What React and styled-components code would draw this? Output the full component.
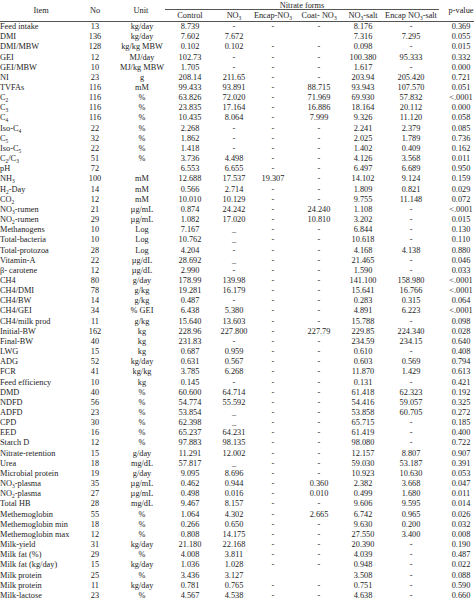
import React from "react";
import styled, { createGlobalStyle } from "styled-components";

const Global = createGlobalStyle`
  html, body { margin: 0; padding: 0; background: #fff; }
  body { overflow: hidden; width: 474px; height: 602px; }
`;

const Wrap = styled.div`
  width: 474px;
  height: 602px;
  overflow: hidden;
  font-family: "Liberation Serif", "Times New Roman", serif;
  font-size: 8.3px;
  color: #1c1c1c;
`;

const Table = styled.table`
  border-collapse: collapse;
  table-layout: fixed;
  width: 482px;
`;

const Head = styled.th`
  font-weight: normal;
  padding: 0;
  text-align: center;
  white-space: nowrap;
  height: ${(p) => p.$h || 10}px;
  vertical-align: middle;
  border-bottom: ${(p) => (p.$rule ? "0.8px solid #555" : "none")};
  padding-left: ${(p) => p.$pl || 0}px;
`;

const SpanHead = styled.th`
  font-weight: normal;
  padding: 0;
  text-align: center;
  height: 10px;
  position: relative;
`;

const MidRule = styled.span`
  position: absolute;
  left: 1px;
  right: 1px;
  bottom: 0;
  border-bottom: 0.8px solid #555;
`;

const Row = styled.tr`
  height: 10.17px;
`;

const Cell = styled.td`
  padding: 0;
  padding-left: ${(p) => p.$pl || 0}px;
  height: 10.17px;
  line-height: 10px;
  white-space: nowrap;
  text-align: ${(p) => (p.$left ? "left" : "center")};
`;

const Sub = styled.sub`
  font-size: 5.5px;
  line-height: 0;
  vertical-align: -1.5px;
`;

const Low = styled.span`
  display: inline-block;
  transform: translateY(2px);
`;

const s = (base, sub, rest = "") => (
  <>
    {base}
    <Sub>{sub}</Sub>
    {rest}
  </>
);

const cols = [82, 26, 56, 52, 36, 42, 50, 38, 58, 42];

const L = "_low";

const rows = [
  ["Feed intake", "13", "kg/day", "8.739", "-", "-", "-", "8.176", "-", "0.369"],
  ["DMI", "136", "kg/day", "7.602", "7.672", "", "", "7.316", "7.295", "0.055"],
  ["DMI/MBW", "128", "kg/kg MBW", "0.102", "0.102", "-", "-", "0.098", "-", "0.015"],
  ["GEI", "12", "MJ/day", "102.73", "-", "-", "-", "100.380", "95.333", "0.332"],
  ["GEI/MBW", "10", "MJ/kg MBW", "1.705", "-", "-", "-", "1.617", "-", "0.000"],
  ["NI", "23", "g", "208.14", "211.65", "-", "-", "203.94", "205.420", "0.721"],
  ["TVFAs", "116", "mM", "99.433", "93.891", "-", "88.715", "93.943", "107.570", "0.051"],
  [s("C", "2"), "116", "%", "63.826", "72.020", "-", "71.969", "69.930", "57.832", "<.0001"],
  [s("C", "3"), "116", "%", "23.835", "17.164", "-", "16.886", "18.164", "20.112", "0.000"],
  [s("C", "4"), "116", "%", "10.435", "8.064", "-", "7.999", "9.326", "11.120", "0.058"],
  [s("Iso-C", "4"), "22", "%", "2.268", "-", "-", "-", "2.241", "2.379", "0.085"],
  [s("C", "5"), "32", "%", "1.862", "-", "-", "-", "2.025", "1.789", "0.736"],
  [s("Iso-C", "5"), "22", "%", "1.418", "-", "-", "-", "1.402", "0.409", "0.162"],
  [<>{s("C", "2")}/{s("C", "3")}</>, "51", "%", "3.736", "4.498", "-", "-", "4.126", "3.568", "0.011"],
  ["pH", "72", "", "6.553", "6.655", "-", "-", "6.497", "6.689", "0.950"],
  [s("NH", "3"), "100", "mM", "12.688", "17.537", "19.307", "-", "14.102", "9.124", "0.159"],
  [s("H", "2", "-Day"), "14", "mM", "0.566", "2.714", "-", "-", "1.809", "0.821", "0.029"],
  [s("CO", "2"), "12", "mM", "10.010", "10.129", "-", "-", "9.755", "11.148", "0.072"],
  [s("NO", "3", "-rumen"), "21", "µg/mL", "0.874", "24.242", "-", "24.240", "1.108", "-", "<.0001"],
  [s("NO", "2", "-rumen"), "29", "µg/mL", "1.082", "17.020", "-", "10.810", "3.202", "-", "0.015"],
  ["Methanogens", "10", "Log", "7.167", L, "-", "-", "6.844", "-", "0.130"],
  ["Total-bacteria", "10", "Log", "10.762", L, "-", "-", "10.618", "-", "0.110"],
  ["Total-protozoa", "28", "Log", "4.204", "-", "-", "-", "4.168", "4.138", "0.880"],
  ["Vitamin-A", "22", "µg/dL", "28.692", L, "-", "-", "21.465", "-", "0.046"],
  ["β- carotene", "12", "µg/dL", "2.990", "-", "-", "-", "1.590", "-", "0.033"],
  ["CH4", "80", "g/day", "178.99", "139.98", "-", "-", "141.100", "158.980", "<.0001"],
  ["CH4/DMI", "78", "g/kg", "19.281", "16.179", "-", "-", "15.641", "16.766", "<.0001"],
  ["CH4/BW", "14", "g/kg", "0.487", "-", "-", "-", "0.283", "0.315", "0.064"],
  ["CH4/GEI", "34", "% GEI", "6.438", "5.380", "-", "-", "4.891", "6.223", "<.0001"],
  ["CH4/milk prod", "11", "g/kg", "15.640", "13.603", "-", "-", "15.788", "-", "0.098"],
  ["Initial-BW", "162", "kg", "228.96", "227.800", "-", "227.79", "229.85", "224.340", "0.028"],
  ["Final-BW", "40", "kg", "231.83", "-", "-", "-", "234.59", "234.15", "0.640"],
  ["LWG", "15", "kg", "0.687", "0.959", "-", "-", "0.610", "-", "0.408"],
  ["ADG", "52", "kg/day", "0.631", "0.567", "-", "-", "0.603", "0.569", "0.794"],
  ["FCR", "41", "kg/kg", "3.785", "6.268", "-", "-", "11.870", "1.429", "0.613"],
  ["Feed efficiency", "10", "kg", "0.145", "-", "-", "-", "0.131", "-", "0.421"],
  ["DMD", "40", "%", "60.600", "64.714", "-", "-", "61.418", "62.323", "0.192"],
  ["NDFD", "56", "%", "54.774", "55.592", "-", "-", "54.416", "59.057", "0.325"],
  ["ADFD", "23", "%", "53.854", L, "-", "-", "53.858", "60.705", "0.272"],
  ["CPD", "30", "%", "62.398", L, "-", "-", "65.715", "-", "0.185"],
  ["EED", "16", "%", "65.237", "64.231", "-", "-", "61.419", "-", "0.400"],
  ["Starch D", "12", "%", "97.883", "98.135", "-", "-", "98.080", "-", "0.722"],
  ["Nitrate-retention", "15", "g/day", "11.291", "12.002", "-", "-", "12.157", "8.807", "0.907"],
  ["Urea", "18", "mg/dL", "57.817", L, "-", "-", "59.030", "53.187", "0.391"],
  ["Microbial protein", "19", "g/day", "9.095", "8.696", "-", "-", "10.923", "10.630", "0.053"],
  [s("NO", "3", "-plasma"), "35", "µg/mL", "0.462", "0.944", "-", "0.360", "2.382", "3.668", "0.047"],
  [s("NO", "2", "-plasma"), "27", "µg/mL", "0.498", "0.016", "-", "0.010", "0.499", "1.680", "0.011"],
  ["Total HB", "28", "mg/dL", "9.467", "8.157", "-", "-", "9.606", "9.595", "0.014"],
  ["Methemoglobin", "55", "%", "1.064", "4.302", "-", "2.665", "6.742", "0.965", "0.026"],
  ["Methemoglobin min", "18", "%", "0.266", "0.650", "-", "-", "9.630", "0.200", "0.032"],
  ["Methemoglobin max", "12", "%", "0.808", "14.175", "-", "-", "27.550", "3.400", "0.008"],
  ["Milk-yield", "31", "kg/day", "21.180", "22.168", "-", "-", "20.390", "-", "0.190"],
  ["Milk fat (%)", "29", "%", "4.008", "3.811", "-", "-", "4.039", "-", "0.487"],
  ["Milk fat (kg/day)", "15", "kg/day", "1.036", "1.028", "-", "-", "0.948", "-", "0.022"],
  ["Milk protein", "25", "%", "3.436", "3.127", "", "", "3.508", "-", "0.088"],
  ["Milk protein", "11", "kg/day", "0.781", "0.765", "-", "-", "0.751", "-", "0.590"],
  ["Milk-lactose", "23", "%", "4.567", "4.538", "-", "-", "4.638", "-", "0.660"],
];

export default function App() {
  return (
    <Wrap>
      <Global />
      <Table>
        <colgroup>
          {cols.map((w, i) => (
            <col key={i} style={{ width: w }} />
          ))}
        </colgroup>
        <thead>
          <tr>
            <Head rowSpan={2} $h={21} $rule>Item</Head>
            <Head rowSpan={2} $h={21} $rule>No</Head>
            <Head rowSpan={2} $h={21} $rule $pl={10}>Unit</Head>
            <SpanHead colSpan={6}>
              Nitrate forms
              <MidRule />
            </SpanHead>
            <Head rowSpan={2} $h={21} $rule>p-value</Head>
          </tr>
          <tr>
            <Head $h={11} $rule>Control</Head>
            <Head $h={11} $rule>{s("NO", "3")}</Head>
            <Head $h={11} $rule>{s("Encap-NO", "3")}</Head>
            <Head $h={11} $rule>{s("Coat- NO", "3")}</Head>
            <Head $h={11} $rule>{s("NO", "3", "-salt")}</Head>
            <Head $h={11} $rule>{s("Encap NO", "3", "-salt")}</Head>
          </tr>
        </thead>
        <tbody>
          {rows.map((r, i) => (
            <Row key={i}>
              {r.map((c, j) => (
                <Cell key={j} $left={j === 0} $pl={j === 2 ? 12 : 0}>
                  {c === L ? <Low>–</Low> : c}
                </Cell>
              ))}
            </Row>
          ))}
        </tbody>
      </Table>
    </Wrap>
  );
}
